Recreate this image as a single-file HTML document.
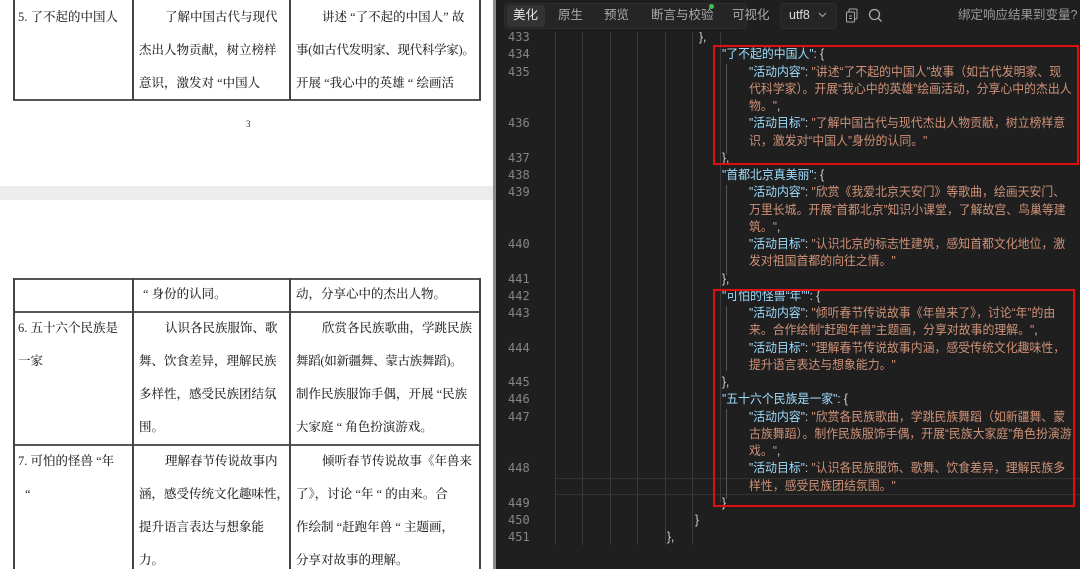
<!DOCTYPE html>
<html><head><meta charset="utf-8">
<style>
*{margin:0;padding:0;box-sizing:border-box}
body{width:1080px;height:569px;overflow:hidden;background:#1e1e1e;position:relative;font-family:"Liberation Sans","Noto Sans CJK SC",sans-serif}
#left{position:absolute;left:0;top:0;width:493px;height:569px;background:#fff;overflow:hidden}
.band{position:absolute;left:0;top:186px;width:493px;height:14px;background:#ececec}
.sb{position:absolute;left:493px;top:0;width:3px;height:569px;background:#8a8a8a}
.t{position:absolute;font-family:"Liberation Serif","Noto Serif CJK SC",serif;font-size:12.5px;color:#2a2a2a;white-space:nowrap;line-height:16px;letter-spacing:0;font-weight:500}
.hl{position:absolute;height:1.5px;background:#555}
.vl{position:absolute;width:1.5px;background:#444}
#right{position:absolute;left:496px;top:0;width:584px;height:569px;background:#1f1f1f;overflow:hidden}
.c{position:absolute;font-size:12.5px;line-height:17px;white-space:nowrap;color:#d4d4d4;transform:scaleX(0.95);transform-origin:0 0}
.tb{position:absolute;font-size:12.5px;line-height:17px;white-space:nowrap}
.k{color:#9cdcfe}.s{color:#ce9178}
.ln{position:absolute;left:12px;font-size:12px;line-height:17px;color:#858585;font-family:"DejaVu Sans Mono","Liberation Mono",monospace}
.g{position:absolute;width:1px;background:#3a3a3a;top:32px;height:513px}
</style></head><body>
<div id="left">
  <div class="hl" style="left:13px;top:99px;width:468px"></div>
  <div class="vl" style="left:13px;top:0;height:100px"></div>
  <div class="vl" style="left:132px;top:0;height:100px"></div>
  <div class="vl" style="left:289px;top:0;height:100px"></div>
  <div class="vl" style="left:479px;top:0;height:100px"></div>
  <div class="t" style="left:18px;top:9px">5. 了不起的中国人</div>
  <div class="t" style="left:165px;top:9px">了解中国古代与现代</div>
  <div class="t" style="left:139px;top:42px">杰出人物贡献，树立榜样</div>
  <div class="t" style="left:139px;top:75px">意识，激发对 “中国人</div>
  <div class="t" style="left:322px;top:9px">讲述 “了不起的中国人” 故</div>
  <div class="t" style="left:296px;top:42px;letter-spacing:-0.3px">事(如古代发明家、现代科学家)。</div>
  <div class="t" style="left:296px;top:75px">开展 “我心中的英雄 “ 绘画活</div>
  <div class="t" style="left:246px;top:116px;font-size:9px">3</div>
  <div class="band"></div>
  <div class="hl" style="left:13px;top:278px;width:468px"></div>
  <div class="hl" style="left:13px;top:311px;width:468px"></div>
  <div class="hl" style="left:13px;top:444px;width:468px"></div>
  <div class="vl" style="left:13px;top:278px;height:300px"></div>
  <div class="vl" style="left:132px;top:278px;height:300px"></div>
  <div class="vl" style="left:289px;top:278px;height:300px"></div>
  <div class="vl" style="left:479px;top:278px;height:300px"></div>
  <div class="t" style="left:143px;top:286px">“ 身份的认同。</div>
  <div class="t" style="left:296px;top:286px">动，分享心中的杰出人物。</div>
  <div class="t" style="left:18px;top:320px">6. 五十六个民族是</div>
  <div class="t" style="left:18px;top:353px">一家</div>
  <div class="t" style="left:165px;top:320px">认识各民族服饰、歌</div>
  <div class="t" style="left:139px;top:353px">舞、饮食差异，理解民族</div>
  <div class="t" style="left:139px;top:386px">多样性，感受民族团结氛</div>
  <div class="t" style="left:139px;top:419px">围。</div>
  <div class="t" style="left:322px;top:320px">欣赏各民族歌曲，学跳民族</div>
  <div class="t" style="left:296px;top:353px;letter-spacing:-0.3px">舞蹈(如新疆舞、蒙古族舞蹈)。</div>
  <div class="t" style="left:296px;top:386px">制作民族服饰手偶，开展 “民族</div>
  <div class="t" style="left:296px;top:419px">大家庭 “ 角色扮演游戏。</div>
  <div class="t" style="left:18px;top:453px">7. 可怕的怪兽 “年</div>
  <div class="t" style="left:25px;top:486px">“</div>
  <div class="t" style="left:165px;top:453px">理解春节传说故事内</div>
  <div class="t" style="left:139px;top:486px">涵，感受传统文化趣味性，</div>
  <div class="t" style="left:139px;top:519px">提升语言表达与想象能</div>
  <div class="t" style="left:139px;top:552px">力。</div>
  <div class="t" style="left:322px;top:453px">倾听春节传说故事《年兽来</div>
  <div class="t" style="left:296px;top:486px">了》，讨论 “年 “ 的由来。合</div>
  <div class="t" style="left:296px;top:519px">作绘制 “赶跑年兽 “ 主题画，</div>
  <div class="t" style="left:296px;top:552px">分享对故事的理解。</div>
</div>
<div class="sb"></div>
<div id="right">
  <div class="g" style="left:59px"></div><div class="g" style="left:86px"></div>
  <div class="g" style="left:114px"></div><div class="g" style="left:141px"></div>
  <div class="g" style="left:169px"></div><div class="g" style="left:196px"></div>
  <div class="g" style="left:224px;height:470px"></div>
  <div style="position:absolute;left:59px;top:478px;width:525px;height:1px;background:#333"></div>
  <div style="position:absolute;left:59px;top:494px;width:525px;height:1px;background:#333"></div>
  <div style="position:absolute;left:230px;top:64px;width:1px;height:90px;background:#555"></div>
  <div style="position:absolute;left:230px;top:185px;width:1px;height:90px;background:#555"></div>
  <div style="position:absolute;left:230px;top:306px;width:1px;height:65px;background:#555"></div>
  <div style="position:absolute;left:230px;top:409px;width:1px;height:90px;background:#555"></div>

  <div class="ln" style="top:29px">433</div><div class="c" style="left:203px;top:29px">},</div>
  <div class="ln" style="top:46px">434</div>
  <div class="c" style="left:226px;top:46px"><span class="k">"了不起的中国人"</span>: {</div>
  <div class="ln" style="top:64px">435</div>
  <div class="c" style="left:253px;top:64px"><span class="k">"活动内容"</span>: <span class="s">"讲述“了不起的中国人”故事（如古代发明家、现</span></div>
  <div class="c s" style="left:253px;top:81px">代科学家）。开展“我心中的英雄”绘画活动，分享心中的杰出人</div>
  <div class="c" style="left:253px;top:98px"><span class="s">物。"</span>,</div>
  <div class="ln" style="top:115px">436</div>
  <div class="c" style="left:253px;top:115px"><span class="k">"活动目标"</span>: <span class="s">"了解中国古代与现代杰出人物贡献，树立榜样意</span></div>
  <div class="c s" style="left:253px;top:133px">识，激发对“中国人”身份的认同。"</div>
  <div class="ln" style="top:150px">437</div><div class="c" style="left:226px;top:150px">},</div>
  <div class="ln" style="top:167px">438</div>
  <div class="c" style="left:226px;top:167px"><span class="k">"首都北京真美丽"</span>: {</div>
  <div class="ln" style="top:184px">439</div>
  <div class="c" style="left:253px;top:184px"><span class="k">"活动内容"</span>: <span class="s">"欣赏《我爱北京天安门》等歌曲，绘画天安门、</span></div>
  <div class="c s" style="left:253px;top:202px">万里长城。开展“首都北京”知识小课堂，了解故宫、鸟巢等建</div>
  <div class="c" style="left:253px;top:219px"><span class="s">筑。"</span>,</div>
  <div class="ln" style="top:236px">440</div>
  <div class="c" style="left:253px;top:236px"><span class="k">"活动目标"</span>: <span class="s">"认识北京的标志性建筑，感知首都文化地位，激</span></div>
  <div class="c s" style="left:253px;top:253px">发对祖国首都的向往之情。"</div>
  <div class="ln" style="top:271px">441</div><div class="c" style="left:226px;top:271px">},</div>
  <div class="ln" style="top:288px">442</div>
  <div class="c" style="left:226px;top:288px"><span class="k">"可怕的怪兽“年”"</span>: {</div>
  <div class="ln" style="top:305px">443</div>
  <div class="c" style="left:253px;top:305px"><span class="k">"活动内容"</span>: <span class="s">"倾听春节传说故事《年兽来了》，讨论“年”的由</span></div>
  <div class="c" style="left:253px;top:322px"><span class="s">来。合作绘制“赶跑年兽”主题画，分享对故事的理解。"</span>,</div>
  <div class="ln" style="top:340px">444</div>
  <div class="c" style="left:253px;top:340px"><span class="k">"活动目标"</span>: <span class="s">"理解春节传说故事内涵，感受传统文化趣味性，</span></div>
  <div class="c s" style="left:253px;top:357px">提升语言表达与想象能力。"</div>
  <div class="ln" style="top:374px">445</div><div class="c" style="left:226px;top:374px">},</div>
  <div class="ln" style="top:391px">446</div>
  <div class="c" style="left:226px;top:391px"><span class="k">"五十六个民族是一家"</span>: {</div>
  <div class="ln" style="top:409px">447</div>
  <div class="c" style="left:253px;top:409px"><span class="k">"活动内容"</span>: <span class="s">"欣赏各民族歌曲，学跳民族舞蹈（如新疆舞、蒙</span></div>
  <div class="c s" style="left:253px;top:426px">古族舞蹈）。制作民族服饰手偶，开展“民族大家庭”角色扮演游</div>
  <div class="c" style="left:253px;top:443px"><span class="s">戏。"</span>,</div>
  <div class="ln" style="top:460px">448</div>
  <div class="c" style="left:253px;top:460px"><span class="k">"活动目标"</span>: <span class="s">"认识各民族服饰、歌舞、饮食差异，理解民族多</span></div>
  <div class="c s" style="left:253px;top:478px">样性，感受民族团结氛围。"</div>
  <div class="ln" style="top:495px">449</div><div class="c" style="left:226px;top:495px">}</div>
  <div class="ln" style="top:512px">450</div><div class="c" style="left:199px;top:512px">}</div>
  <div class="ln" style="top:529px">451</div><div class="c" style="left:171px;top:529px">},</div>

  <div style="position:absolute;left:217px;top:45px;width:366px;height:120px;border:2px solid #e01010"></div>
  <div style="position:absolute;left:217px;top:289px;width:362px;height:218px;border:2px solid #e01010"></div>

  <div style="position:absolute;left:0;top:0;width:584px;height:32px;background:#1f1f1f"></div>
  <div style="position:absolute;left:8px;top:3px;width:243px;height:26px;background:#252526;border:1px solid #2e2e2e;border-radius:4px"></div>
  <div style="position:absolute;left:11px;top:5px;width:38px;height:22px;background:#333;border-radius:3px"></div>
  <div class="tb" style="left:17px;top:7px;color:#e6e6e6">美化</div>
  <div class="tb" style="left:62px;top:7px;color:#aaa">原生</div>
  <div class="tb" style="left:108px;top:7px;color:#aaa">预览</div>
  <div class="tb" style="left:155px;top:7px;color:#aaa">断言与校验</div>
  <div style="position:absolute;left:213px;top:4px;width:5px;height:5px;border-radius:50%;background:#3fbf4f"></div>
  <div class="tb" style="left:236px;top:7px;color:#aaa">可视化</div>
  <div style="position:absolute;left:284px;top:3px;width:57px;height:26px;background:#252526;border:1px solid #2e2e2e;border-radius:4px"></div>
  <div class="tb" style="left:293px;top:7px;color:#ddd">utf8</div>
  <svg style="position:absolute;left:322px;top:12px" width="9" height="6"><path d="M1 1 L4.5 4.5 L8 1" stroke="#aaa" fill="none" stroke-width="1"/></svg>
  <svg style="position:absolute;left:349px;top:8px" width="14" height="16"><rect x="4" y="1" width="8" height="10" rx="1" stroke="#aaa" fill="none"/><rect x="1.5" y="4" width="8" height="10" rx="1" stroke="#aaa" fill="#1f1f1f"/><path d="M4 8h3M4 10.5h3" stroke="#aaa"/></svg>
  <svg style="position:absolute;left:372px;top:8px" width="15" height="15"><circle cx="6.5" cy="6.5" r="5" stroke="#aaa" fill="none" stroke-width="1.3"/><path d="M10 10 L13.5 13.5" stroke="#aaa" stroke-width="1.3"/></svg>
  <div class="tb" style="left:462px;top:7px;color:#999">绑定响应结果到变量?</div>
</div>
</body></html>
